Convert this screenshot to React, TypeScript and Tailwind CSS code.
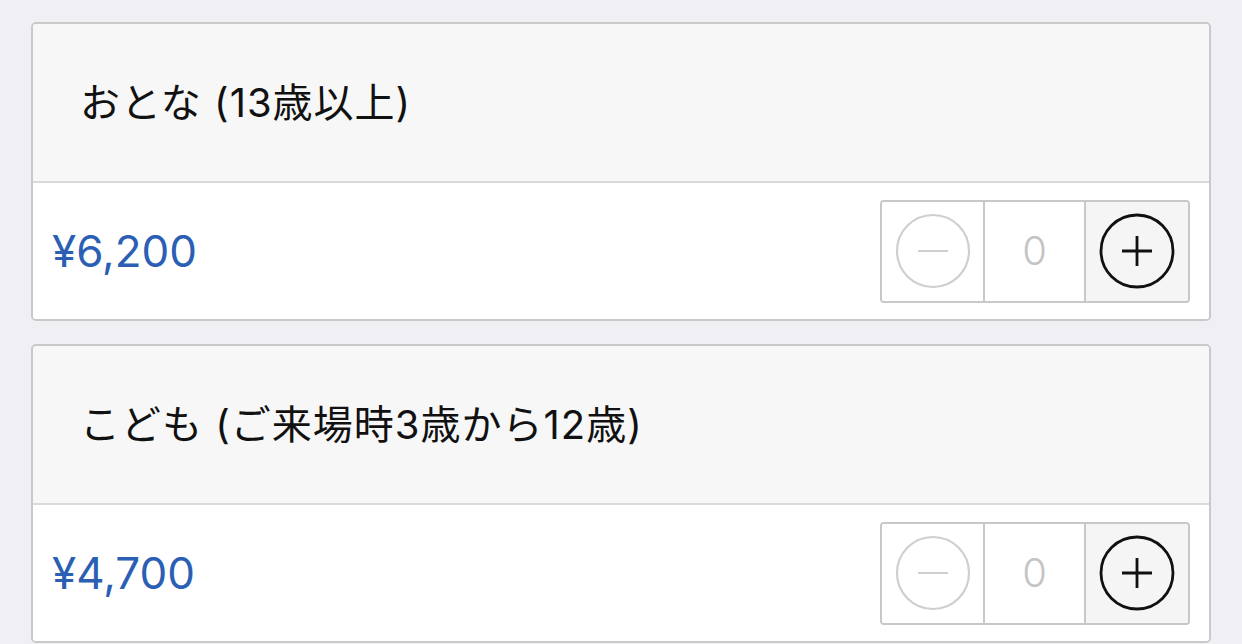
const tickets = [
  { label: 'おとな (13歳以上)', price: '¥6,200' },
  { label: 'こども (ご来場時3歳から12歳)', price: '¥4,700' },
];

function MinusIcon() {
  return (
    <svg width="76" height="76" viewBox="0 0 76 76" fill="none">
      <circle cx="38" cy="38" r="36" stroke="#cfcfcf" strokeWidth="2.2" />
      <line x1="23" y1="38" x2="53" y2="38" stroke="#cfcfcf" strokeWidth="2.2" />
    </svg>
  );
}

function PlusIcon() {
  return (
    <svg width="76" height="76" viewBox="0 0 76 76" fill="none">
      <circle cx="38" cy="38" r="36" stroke="#111" strokeWidth="2.8" />
      <line x1="23" y1="38" x2="53" y2="38" stroke="#111" strokeWidth="2.8" />
      <line x1="38" y1="23" x2="38" y2="53" stroke="#111" strokeWidth="2.8" />
    </svg>
  );
}

function Stepper() {
  return (
    <div className="flex h-[103px] w-[310px] rounded-[4px] border-2 border-[#c8c8c8] overflow-hidden">
      <button className="flex w-[101px] items-center justify-center bg-white">
        <MinusIcon />
      </button>
      <div className="flex w-[103px] items-center justify-center border-x-2 border-[#c8c8c8] bg-white text-[40px] font-light text-[#c4c4c4] font-['Inter',sans-serif]">
        0
      </div>
      <button className="flex flex-1 items-center justify-center bg-[#f5f5f5]">
        <PlusIcon />
      </button>
    </div>
  );
}

export default function App() {
  return (
    <div className="min-h-[644px] bg-[#efeff4] px-[31px] pt-[22px] flex flex-col gap-[23px]">
      {tickets.map(t => (
        <div key={t.label} className="rounded-[5px] border-2 border-[#c9c9c9] overflow-hidden">
          {/* Header */}
          <div className="flex h-[159px] items-center border-b-2 border-[#dadada] bg-[#f7f7f7] pl-[47px] text-[40px] tracking-[1px] text-[#111] font-['Inter','Noto_Sans_CJK_JP',sans-serif]">
            {t.label}
          </div>
          {/* Price row */}
          <div className="flex h-[136px] items-center justify-between bg-white px-[19px]">
            <span className="text-[44px] text-[#2b5fb4] font-['Inter',sans-serif]">{t.price}</span>
            <Stepper />
          </div>
        </div>
      ))}
    </div>
  );
}
